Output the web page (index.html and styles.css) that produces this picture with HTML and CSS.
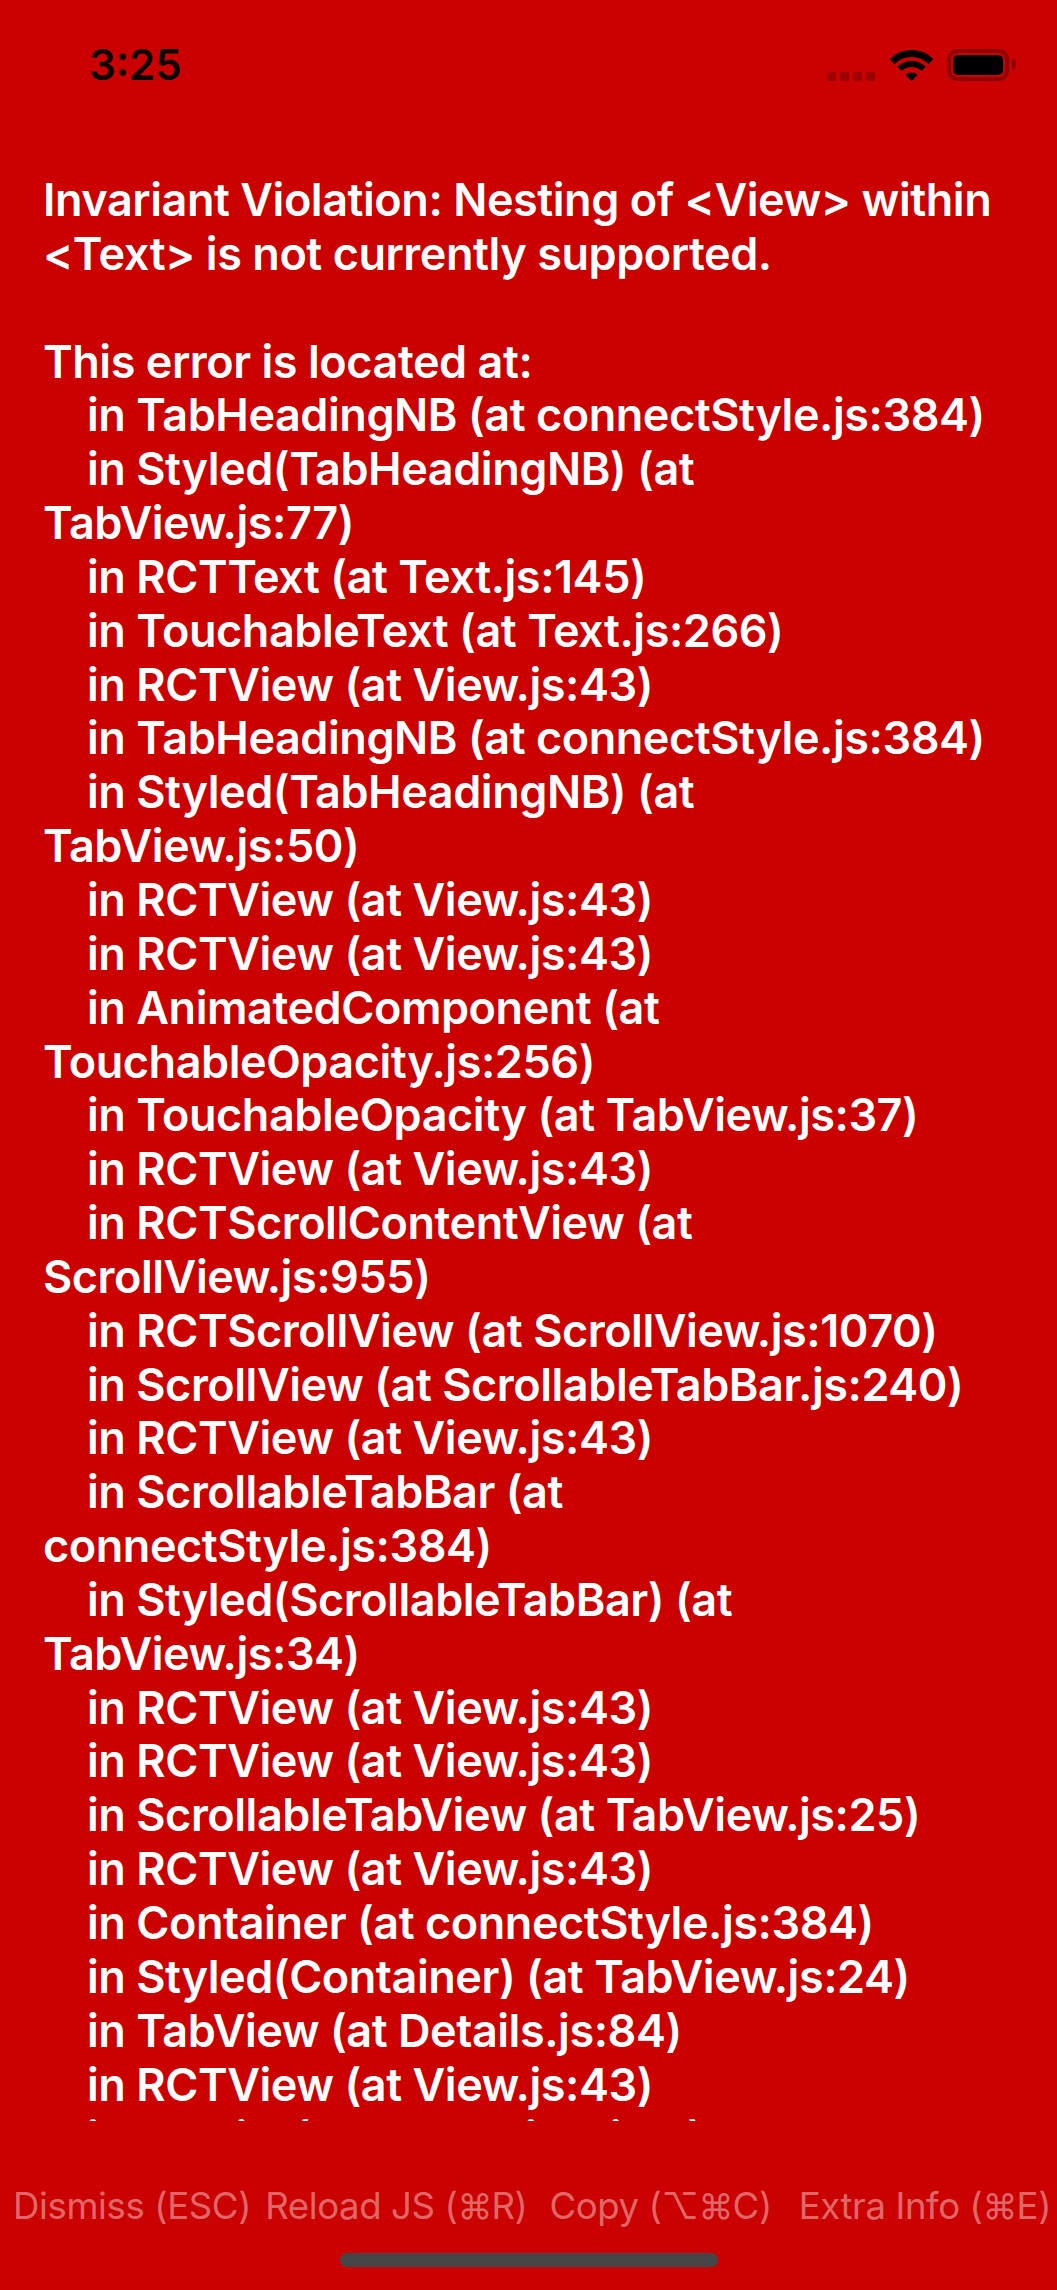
FILE: index.html
```html
<!DOCTYPE html>
<html lang="en">
<head>
<meta charset="utf-8">
<title>Red box</title>
<link rel="stylesheet" href="styles.css">
</head>
<body>
<div class="screen">
  <header class="status">
    <span class="clock">3:25</span>
    <div class="indicators">
      <div class="signal"><i></i><i></i><i></i><i></i></div>
      <svg class="wifi" viewBox="0 0 43 31" width="43" height="31" aria-hidden="true">
        <path class="arc arc-outer" d="M2.05 11.55A27.5 27.5 0 0 1 40.95 11.55"/>
        <path class="arc arc-inner" d="M9.48 18.98A17 17 0 0 1 33.52 18.98"/>
        <path d="M21.5 31L15.49 24.99A8.5 8.5 0 0 1 27.51 24.99Z"/>
      </svg>
      <div class="battery"><div class="charge"></div></div>
      <div class="battery-cap"></div>
    </div>
  </header>
  <main class="message">
    <p class="line">Invariant Violation: Nesting of &lt;View&gt; within</p>
    <p class="line">&lt;Text&gt; is not currently supported.</p>
    <p class="line blank">&nbsp;</p>
    <p class="line">This error is located at:</p>
    <p class="line frame">in TabHeadingNB (at connectStyle.js:384)</p>
    <p class="line frame">in Styled(TabHeadingNB) (at</p>
    <p class="line">TabView.js:77)</p>
    <p class="line frame">in RCTText (at Text.js:145)</p>
    <p class="line frame">in TouchableText (at Text.js:266)</p>
    <p class="line frame">in RCTView (at View.js:43)</p>
    <p class="line frame">in TabHeadingNB (at connectStyle.js:384)</p>
    <p class="line frame">in Styled(TabHeadingNB) (at</p>
    <p class="line">TabView.js:50)</p>
    <p class="line frame">in RCTView (at View.js:43)</p>
    <p class="line frame">in RCTView (at View.js:43)</p>
    <p class="line frame">in AnimatedComponent (at</p>
    <p class="line">TouchableOpacity.js:256)</p>
    <p class="line frame">in TouchableOpacity (at TabView.js:37)</p>
    <p class="line frame">in RCTView (at View.js:43)</p>
    <p class="line frame">in RCTScrollContentView (at</p>
    <p class="line">ScrollView.js:955)</p>
    <p class="line frame">in RCTScrollView (at ScrollView.js:1070)</p>
    <p class="line frame">in ScrollView (at ScrollableTabBar.js:240)</p>
    <p class="line frame">in RCTView (at View.js:43)</p>
    <p class="line frame">in ScrollableTabBar (at</p>
    <p class="line">connectStyle.js:384)</p>
    <p class="line frame">in Styled(ScrollableTabBar) (at</p>
    <p class="line">TabView.js:34)</p>
    <p class="line frame">in RCTView (at View.js:43)</p>
    <p class="line frame">in RCTView (at View.js:43)</p>
    <p class="line frame">in ScrollableTabView (at TabView.js:25)</p>
    <p class="line frame">in RCTView (at View.js:43)</p>
    <p class="line frame">in Container (at connectStyle.js:384)</p>
    <p class="line frame">in Styled(Container) (at TabView.js:24)</p>
    <p class="line frame">in TabView (at Details.js:84)</p>
    <p class="line frame">in RCTView (at View.js:43)</p>
    <p class="line frame">in Details (at SceneView.js:9)</p>
  </main>
  <footer class="actions">
    <button class="action">Dismiss (ESC)</button>
    <button class="action">Reload JS (<span class="cmd">⌘</span>R)</button>
    <button class="action">Copy (⌥<span class="cmd">⌘</span>C)</button>
    <button class="action">Extra Info (<span class="cmd">⌘</span>E)</button>
  </footer>
  <div class="home-area"><div class="home-bar"></div></div>
</div>
</body>
</html>
```

FILE: styles.css
```css
* { box-sizing: border-box; }
html, body { margin: 0; padding: 0; }
body {
  background: #cb0000;
  font-family: Inter, "Noto Sans", "DejaVu Sans", sans-serif;
}
.screen {
  width: 1057px;
  height: 2290px;
  display: flex;
  flex-direction: column;
  overflow: hidden;
  background: #cb0000;
}

/* status bar */
.status {
  height: 173px;
  flex: none;
  display: flex;
  justify-content: space-between;
  align-items: flex-start;
  padding: 40px 41px 0 89px;
}
.clock {
  font-size: 42px;
  line-height: 50px;
  font-weight: 600;
  color: #0b0000;
}
.indicators {
  display: flex;
  align-items: flex-end;
  margin-top: 9px;
}
.signal {
  display: flex;
  gap: 4px;
  margin-right: 15px;
}
.signal i {
  display: block;
  width: 9px;
  height: 9px;
  border-radius: 2px;
  background: #9a0000;
}
.wifi { display: block; margin-right: 14px; fill: #000; }
.wifi .arc { fill: none; stroke: #000; }
.wifi .arc-outer { stroke-width: 7; }
.wifi .arc-inner { stroke-width: 6; }
.battery {
  width: 62px;
  height: 32px;
  border: 4px solid #8f0000;
  border-radius: 10px;
  padding: 2px;
}
.charge {
  height: 100%;
  background: #000;
  border-radius: 5px;
}
.battery-cap {
  width: 4px;
  height: 11px;
  margin: 0 0 11px 3px;
  background: #8f0000;
  border-radius: 0 6px 6px 0;
}

/* message */
.message {
  flex: 1;
  min-height: 0;
  overflow: hidden;
  padding-left: 43px;
  color: #fff;
  font-size: 45px;
  line-height: 53.85px;
  font-weight: 560;
  letter-spacing: -0.45px;
}
.line { margin: 0; white-space: pre; }
.frame { padding-left: 44px; }

/* buttons */
.actions {
  flex: none;
  height: 117px;
  display: grid;
  grid-template-columns: repeat(4, 1fr);
  align-items: start;
  padding-top: 63px;
}
.action {
  appearance: none;
  border: 0;
  padding: 0;
  background: none;
  font-family: Inter, "DejaVu Sans", sans-serif;
  font-size: 36.6px;
  line-height: 44px;
  font-weight: 400;
  letter-spacing: -0.4px;
  color: rgba(255, 255, 255, 0.42);
  text-align: center;
  white-space: nowrap;
}
.cmd { font-size: 35px; letter-spacing: -1px; }

/* home indicator */
.home-area {
  flex: none;
  height: 52px;
  padding-top: 15px;
  display: flex;
  justify-content: center;
}
.home-bar {
  width: 378px;
  height: 14px;
  border-radius: 7px;
  background: #464646;
}
```
